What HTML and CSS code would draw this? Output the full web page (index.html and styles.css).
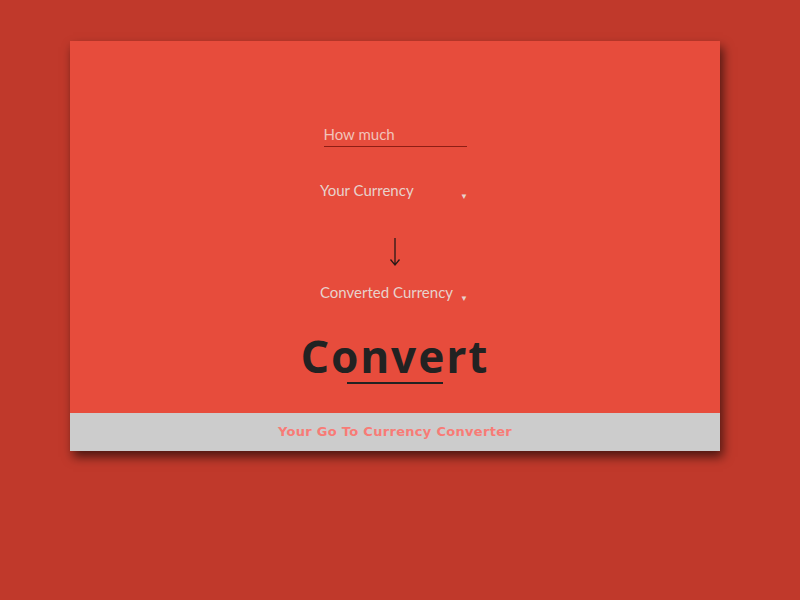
FILE: index.html
```html
<!DOCTYPE html>
<html>
<head>
<meta charset="utf-8">
<link rel="stylesheet" href="styles.css">
</head>
<body>
<div class="card">
  <div class="main">
    <div class="field amount"><span class="placeholder">How much</span></div>
    <div class="select from"><span>Your Currency</span><span class="caret">▼</span></div>
    <svg class="arrow" width="12" height="30" viewBox="0 0 12 30"><path d="M6 1V28M1.5 22.5L6 28L10.5 22.5" fill="none" stroke="#2a1a18" stroke-width="1.3"/></svg>
    <div class="select to"><span>Converted Currency</span><span class="caret">▼</span></div>
    <div class="convert">Convert</div>
    <div class="underline"></div>
  </div>
  <div class="footer">Your Go To Currency Converter</div>
</div>
</body>
</html>
```
FILE: styles.css
```css
html, body { margin: 0; padding: 0; }
body { background: #c0392b; width: 800px; height: 600px; overflow: hidden; font-family: Lato, "Open Sans", sans-serif; }
.card {
  width: 650px; margin: 41px 0 0 70px; background: #e74c3c;
  box-shadow: 3px 6px 10px rgba(0,0,0,0.6);
  display: flex; flex-direction: column;
}
.main { height: 372px; display: flex; flex-direction: column; align-items: center; }
.field { width: 143px; margin: 81px 0 0 0; border-bottom: 1px solid #8e1e15; height: 25px; box-sizing: border-box; }
.placeholder { font-size: 15px; font-weight: 400; color: #f2c3ba; line-height: 24px; }
.select { width: 150px; display: flex; justify-content: space-between; font-size: 15px; font-weight: 400; color: #e8d2cc; }
.from { margin-top: 34px; height: 22px; }
.to { margin-top: 16px; height: 22px; }
.caret { font-size: 8px; margin-top: 10px; margin-right: 2px; color: #e8d2cc; }
.arrow { display: block; margin-top: 34px; }
.convert { font-family: "Noto Sans", Lato, sans-serif; font-weight: 700; font-size: 44px; letter-spacing: 2px; color: #222; margin-top: 26px; line-height: 50px; }
.underline { width: 96px; height: 2px; background: #222; margin-top: 1px; }
.footer { height: 38px; background: #cccccc; text-align: center; line-height: 38px; font-family: "DejaVu Sans", sans-serif; font-weight: 700; font-size: 13px; color: #f87b76; letter-spacing: 0.3px; }
```
